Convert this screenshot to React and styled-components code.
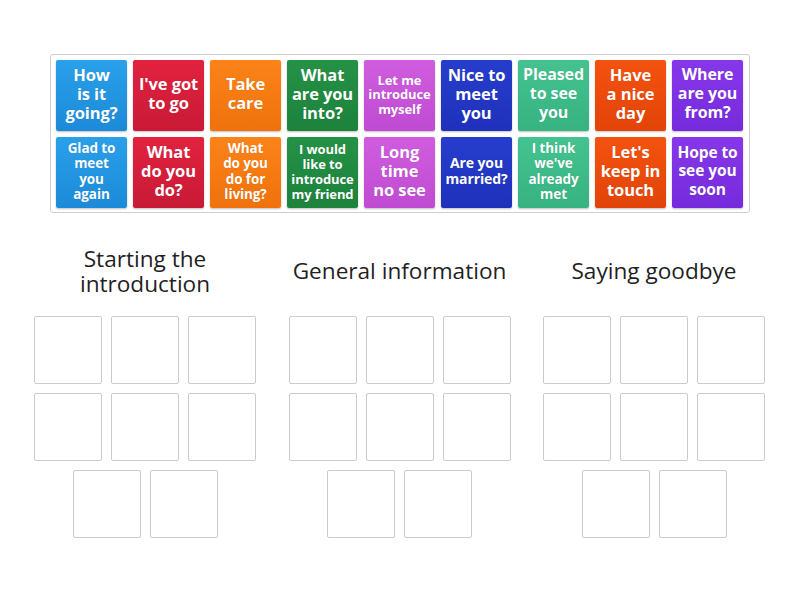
import React from "react";
import styled, { createGlobalStyle } from "styled-components";

const Global = createGlobalStyle`
  html, body { margin: 0; padding: 0; background: #ffffff; }
  body { font-family: "Open Sans", "Noto Sans", sans-serif; }
`;

const Page = styled.div`
  width: 800px;
  height: 600px;
  padding-top: 54px;
  box-sizing: border-box;
`;

const Tray = styled.div`
  box-sizing: border-box;
  width: 700px;
  margin: 0 auto;
  border: 1px solid #cfcfcf;
  border-radius: 3px;
  padding: 5px 6px 4px 5px;
  display: grid;
  grid-template-columns: repeat(9, 71px);
  grid-auto-rows: 71px;
  gap: 6px;
`;

const Tile = styled.div`
  box-sizing: border-box;
  border-radius: 2px;
  background: linear-gradient(180deg, ${(p) => p.$top} 0%, ${(p) => p.$bottom} 100%);
  box-shadow: 0 1px 2px rgba(0, 0, 0, 0.25);
  color: #ffffff;
  font-family: "Open Sans", sans-serif;
  font-weight: 700;
  font-size: ${(p) => p.$size}px;
  line-height: ${(p) => p.$lh}px;
  display: flex;
  align-items: center;
  justify-content: center;
  text-align: center;
  padding: 0 2px ${(p) => p.$pb}px;
  letter-spacing: -0.1px;
  text-shadow: 0 0 1px rgba(0, 0, 0, 0.15);
`;

const Columns = styled.div`
  display: flex;
  justify-content: center;
  gap: 32.5px;
  margin-top: 33px;
  padding-right: 1px;
`;

const Column = styled.div`
  width: 222px;
  display: flex;
  flex-direction: column;
  align-items: center;
`;

const Title = styled.div`
  height: 50px;
  display: flex;
  align-items: center;
  justify-content: center;
  text-align: center;
  font-family: "Open Sans", sans-serif;
  font-size: 22.6px;
  line-height: 25.5px;
  color: #1f1f1f;
  width: 100%;
  white-space: nowrap;
`;

const Slots = styled.div`
  margin-top: 20px;
  width: 222px;
  display: flex;
  flex-wrap: wrap;
  justify-content: center;
  gap: 9px;
`;

const Slot = styled.div`
  box-sizing: border-box;
  width: 68px;
  height: 68px;
  border: 1px solid #cbcbcb;
  border-radius: 2px;
  background: #ffffff;
`;

const C = {
  blue: ["#2aa0ea", "#1c8ad8"],
  red: ["#e2223f", "#c81a36"],
  orange: ["#fb8318", "#ef720c"],
  green: ["#259146", "#1d823c"],
  pink: ["#d05cdf", "#bf4bd2"],
  navy: ["#263dcc", "#1f31bb"],
  teal: ["#44c391", "#37b281"],
  flame: ["#f4520f", "#e24308"],
  purple: ["#8737ea", "#752bdb"],
};

const tiles = [
  { t: ["How", "is it", "going?"], c: "blue", s: 16.5, lh: 19, pb: 5 },
  { t: ["I've got", "to go"], c: "red", s: 16.5, lh: 19, pb: 5 },
  { t: ["Take", "care"], c: "orange", s: 16.5, lh: 19, pb: 5 },
  { t: ["What", "are you", "into?"], c: "green", s: 16.5, lh: 19, pb: 5 },
  { t: ["Let me", "introduce", "myself"], c: "pink", s: 13, lh: 14.5, pb: 2 },
  { t: ["Nice to", "meet", "you"], c: "navy", s: 16.5, lh: 19, pb: 5 },
  { t: ["Pleased", "to see", "you"], c: "teal", s: 16, lh: 19, pb: 5 },
  { t: ["Have", "a nice", "day"], c: "flame", s: 16.5, lh: 19, pb: 5 },
  { t: ["Where", "are you", "from?"], c: "purple", s: 16, lh: 19, pb: 5 },
  { t: ["Glad to", "meet", "you", "again"], c: "blue", s: 13.5, lh: 15.5, pb: 2 },
  { t: ["What", "do you", "do?"], c: "red", s: 16.5, lh: 19, pb: 5 },
  { t: ["What", "do you", "do for", "living?"], c: "orange", s: 13.5, lh: 15.3, pb: 2 },
  { t: ["I would", "like to", "introduce", "my friend"], c: "green", s: 13, lh: 15, pb: 2 },
  { t: ["Long", "time", "no see"], c: "pink", s: 16.5, lh: 19, pb: 5 },
  { t: ["Are you", "married?"], c: "navy", s: 14, lh: 16, pb: 4 },
  { t: ["I think", "we've", "already", "met"], c: "teal", s: 13.5, lh: 15.3, pb: 2 },
  { t: ["Let's", "keep in", "touch"], c: "flame", s: 16.5, lh: 19, pb: 5 },
  { t: ["Hope to", "see you", "soon"], c: "purple", s: 15.5, lh: 18.5, pb: 4 },
];

const groups = [
  { title: ["Starting the", "introduction"], n: 8 },
  { title: ["General information"], n: 8 },
  { title: ["Saying goodbye"], n: 8 },
];

const Lines = ({ lines }) => (
  <span>
    {lines.map((line, j) => (
      <React.Fragment key={j}>
        {line}
        {j < lines.length - 1 && <br />}
      </React.Fragment>
    ))}
  </span>
);

export default function App() {
  return (
    <>
      <Global />
      <Page>
        <Tray>
          {tiles.map((tile, i) => (
            <Tile
              key={i}
              $top={C[tile.c][0]}
              $bottom={C[tile.c][1]}
              $size={tile.s}
              $lh={tile.lh}
              $pb={tile.pb}
            >
              <Lines lines={tile.t} />
            </Tile>
          ))}
        </Tray>
        <Columns>
          {groups.map((g, i) => (
            <Column key={i}>
              <Title>
                <Lines lines={g.title} />
              </Title>
              <Slots>
                {Array.from({ length: g.n }).map((_, k) => (
                  <Slot key={k} />
                ))}
              </Slots>
            </Column>
          ))}
        </Columns>
      </Page>
    </>
  );
}
